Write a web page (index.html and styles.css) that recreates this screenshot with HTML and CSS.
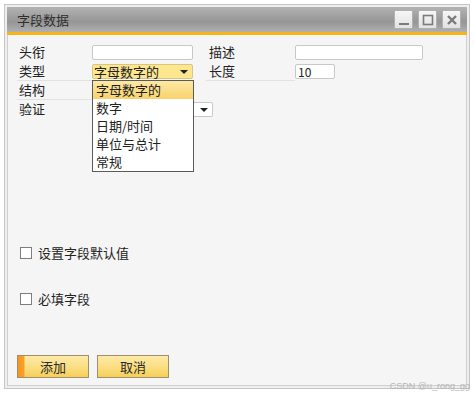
FILE: index.html
```html
<!DOCTYPE html>
<html lang="zh">
<head>
<meta charset="utf-8">
<title>字段数据</title>
<link rel="stylesheet" href="styles.css">
</head>
<body>
<div class="window">
  <div class="titlebar">
    <span class="title">字段数据</span>
    <div class="winbtns">
      <span class="winbtn"><svg width="12" height="12" viewBox="0 0 12 12"><rect x="1" y="9" width="10" height="2" fill="#7a7a7a"/></svg></span>
      <span class="winbtn"><svg width="12" height="12" viewBox="0 0 12 12"><rect x="1.5" y="1.5" width="9" height="9" fill="none" stroke="#7a7a7a" stroke-width="1.6"/></svg></span>
      <span class="winbtn"><svg width="12" height="12" viewBox="0 0 12 12"><path d="M2 2 L10 10 M10 2 L2 10" stroke="#7a7a7a" stroke-width="2.4"/></svg></span>
    </div>
  </div>
  <div class="accent"></div>
  <div class="panel">
    <div class="form">
      <div class="row">
        <span class="label">头衔</span>
        <span class="input w100"></span>
        <span class="label label2">描述</span>
        <span class="input w128"></span>
      </div>
      <div class="row">
        <span class="label line">类型</span>
        <span class="select active w100"><span class="seltext">字母数字的</span><span class="arrow"></span></span>
        <span class="label label2 line">长度</span>
        <span class="input w39"><span class="val">10</span></span>
      </div>
      <div class="row">
        <span class="label line">结构</span>
      </div>
      <div class="row">
        <span class="label">验证</span>
        <span class="select w121"><span class="seltext"></span><span class="arrow"></span></span>
      </div>
      <ul class="dropdown">
        <li class="item selected">字母数字的</li>
        <li class="item">数字</li>
        <li class="item">日期/时间</li>
        <li class="item">单位与总计</li>
        <li class="item">常规</li>
      </ul>
    </div>
    <div class="checks">
      <label class="check"><span class="box"></span>设置字段默认值</label>
      <label class="check"><span class="box"></span>必填字段</label>
    </div>
    <div class="buttons">
      <span class="btn primary">添加</span>
      <span class="btn">取消</span>
    </div>
  </div>
</div>
<span class="watermark">CSDN @u_rong_gg</span>
</body>
</html>
```
FILE: styles.css
```css
* { box-sizing: border-box; }
html, body { margin: 0; padding: 0; }
body {
  width: 474px;
  height: 397px;
  background: #ffffff;
  font-family: "Noto Sans CJK SC", "Noto Sans", sans-serif;
  font-size: 13px;
  color: #222;
  position: relative;
  overflow: hidden;
}
.window {
  margin: 4px 0 0 4px;
  width: 466px;
  height: 385px;
  border: 1px solid #c6c6c6;
  padding: 2px;
  background: #eeeeee;
  display: flex;
  flex-direction: column;
}
.titlebar {
  height: 25px;
  background: linear-gradient(to bottom, #b3b3b3 0%, #9c9c9c 45%, #969696 60%, #b0b0b0 100%);
  display: flex;
  align-items: center;
  justify-content: space-between;
  padding: 0 6px 0 10px;
}
.title {
  color: #2e2e2e;
  font-size: 13px;
  line-height: 1;
}
.winbtns { display: flex; gap: 5px; }
.winbtn {
  width: 19px;
  height: 19px;
  border: 1px solid #b0b0b0;
  background: linear-gradient(to bottom, #f6f6f6, #e2e2e2);
  display: flex;
  align-items: center;
  justify-content: center;
}
.accent {
  height: 3px;
  background: #f5b417;
}
.panel {
  flex: 1;
  background: #f5f5f5;
  border: 1px solid #d0d0d0;
  border-top: none;
  display: flex;
  flex-direction: column;
  padding: 8px 0 0 9px;
}
.form {
  position: relative;
  display: flex;
  flex-direction: column;
}
.row {
  height: 19px;
  display: flex;
  align-items: center;
}
.label {
  width: 75px;
  height: 19px;
  line-height: 18px;
  padding-left: 2px;
  flex: none;
}
.label.line { border-bottom: 1px solid #e2e2e2; }
.label2 {
  width: 89px;
  margin-left: 13px;
  padding-left: 3px;
}
.input {
  height: 15px;
  background: #fff;
  border: 1px solid #c8c8c8;
  border-radius: 2px;
  flex: none;
  display: flex;
  align-items: center;
}
.val { font-size: 12px; padding-left: 2px; line-height: 1; }
.w100 { width: 101px; }
.w128 { width: 128px; }
.w39 { width: 40px; }
.w121 { width: 121px; }
.select {
  height: 15px;
  background: #fff;
  border: 1px solid #c8c8c8;
  border-radius: 2px;
  flex: none;
  display: flex;
  align-items: center;
  justify-content: space-between;
  padding: 0 4px 0 1px;
}
.select.active {
  background: #fde68e;
  border-color: #d6c583;
}
.seltext { line-height: 1; }
.arrow {
  width: 0;
  height: 0;
  border-left: 4px solid transparent;
  border-right: 4px solid transparent;
  border-top: 4px solid #222;
}
.dropdown {
  position: absolute;
  left: 75px;
  top: 37px;
  width: 102px;
  margin: 0;
  padding: 0;
  list-style: none;
  background: #fff;
  border: 1px solid #5a5a5a;
}
.item {
  height: 18px;
  line-height: 18px;
  padding-left: 3px;
}
.item.selected {
  background: linear-gradient(to bottom, #fde9a6, #f9d26a);
}
.checks {
  display: flex;
  flex-direction: column;
  gap: 27px;
  margin-top: 124px;
  padding-left: 3px;
}
.check {
  display: flex;
  align-items: center;
  height: 19px;
  gap: 6px;
}
.box {
  width: 12px;
  height: 12px;
  border: 1px solid #7d7d7d;
  background: #fff;
}
.buttons {
  display: flex;
  gap: 8px;
  margin-top: 47px;
  padding-left: 0;
}
.btn {
  width: 72px;
  height: 23px;
  border: 1px solid #a08f6c;
  background: linear-gradient(to bottom, #fdeaa8 0%, #fbdf85 50%, #f6cf57 100%);
  display: flex;
  align-items: center;
  justify-content: center;
  color: #2a2a2a;
}
.btn.primary {
  background:
    linear-gradient(to right, #f7951e 0, #f9a12c 6px, transparent 7px),
    linear-gradient(to bottom, #fdeaa8 0%, #fbdf85 50%, #f6cf57 100%);
}
.watermark {
  position: absolute;
  right: 4px;
  top: 381px;
  font-family: "Liberation Sans", sans-serif;
  font-size: 9px;
  color: #b5b5b5;
}
```
